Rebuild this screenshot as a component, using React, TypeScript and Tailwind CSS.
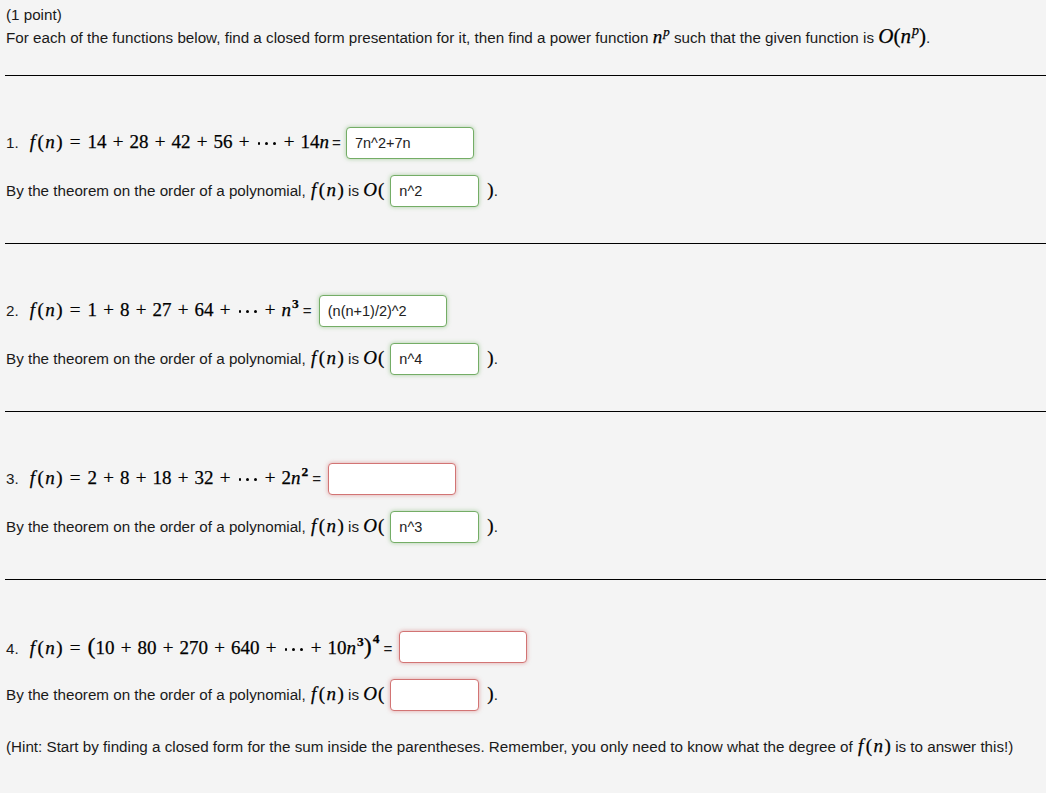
import React from "react";

const M = ({ children }: { children: React.ReactNode }) => (
  <span className="font-['Liberation_Serif','DejaVu_Serif',serif] text-[19px] leading-none whitespace-nowrap text-black [-webkit-text-stroke:0.25px_black]">
    {children}
  </span>
);
const I = ({ children }: { children: React.ReactNode }) => <span className="italic">{children}</span>;
const Plus = () => <span className="mx-[4px] inline-block w-[15px] text-center">+</span>;
const Eq = () => <span className="mx-[5px] inline-block w-[15px] text-center">=</span>;
const Dots = () => (
  <span className="inline-flex w-[22px] items-center justify-between px-[2px] align-middle">
    <span className="h-[2.5px] w-[2.5px] rounded-full bg-black" />
    <span className="h-[2.5px] w-[2.5px] rounded-full bg-black" />
    <span className="h-[2.5px] w-[2.5px] rounded-full bg-black" />
  </span>
);
const Sup = ({ children }: { children: React.ReactNode }) => (
  <span className="relative -top-[8px] ml-[1px] text-[13.5px] font-bold">{children}</span>
);

const Fn = () => (
  <>
    <span className="italic pl-[1px] pr-[2.5px]">f</span>(<span className="italic px-[1.5px]">n</span>)
  </>
);

function Box({ value, ok, wide }: { value: string; ok: boolean; wide?: boolean }) {
  const cls = ok
    ? "border-[#74ad66] shadow-[0_0_4px_rgba(110,175,95,0.55)]"
    : "border-[#d27474] shadow-[0_0_4px_rgba(210,100,100,0.55)]";
  return (
    <input
      readOnly
      value={value}
      className={`h-[32px] ${wide ? "w-[128px]" : "w-[89px]"} rounded-[4px] border bg-white px-[8px] text-[14.5px] text-[#222] outline-none ${cls}`}
    />
  );
}

function Section({
  num,
  math,
  top,
  topOk,
  bottom,
  bottomOk,
  last,
  tight,
}: {
  num: string;
  math: React.ReactNode;
  top: string;
  topOk: boolean;
  bottom: string;
  bottomOk: boolean;
  last?: boolean;
  tight?: boolean;
}) {
  return (
    <div className="border-t border-black">
      <div className={`pt-[51px] ${last ? "" : "pb-[36px]"}`}>
        <div className="flex h-[32px] items-center pl-[1px]">
          <span className="whitespace-nowrap">
            {num}
            <span className="ml-[10px]">
              <M>{math}</M>
            </span>
            <span className={tight ? "ml-[3px]" : "ml-[4px]"}>=</span>
          </span>
          <span className={tight ? "ml-[5px]" : "ml-[7px]"}>
            <Box value={top} ok={topOk} wide />
          </span>
        </div>
        <div className="mt-[16px] flex h-[32px] items-center pl-[1px]">
          <span className="whitespace-nowrap">
            By the theorem on the order of a polynomial,&nbsp;
            <M>
              <Fn />
            </M>
            &nbsp;is&nbsp;
            <M>
              <I>O</I>
              <span className="ml-[1px]">(</span>
            </M>
          </span>
          <span className="ml-[6px]">
            <Box value={bottom} ok={bottomOk} />
          </span>
          <span className="ml-[8px] whitespace-nowrap">
            <M>)</M>.
          </span>
        </div>
      </div>
    </div>
  );
}

export default function App() {
  return (
    <div className="min-h-screen overflow-hidden bg-[#f4f4f4] pl-[5px] font-['Liberation_Sans',Arial,sans-serif] text-[15.2px] leading-[22px] text-[#1a1a1a]">
      <div className="pt-[4px] pl-[1px]">
        <div>(1 point)</div>
        <div className="whitespace-nowrap">
          For each of the functions below, find a closed form presentation for it, then find a power function&nbsp;
          <M>
            <I>n</I>
            <span className="relative -top-[7px] ml-[1px] text-[13px] italic">p</span>
          </M>
          &nbsp;such that the given function is&nbsp;
          <M>
            <span className="text-[21px]">
              <I>O</I>(<I>n</I>
              <span className="relative -top-[8px] ml-[1px] text-[14px] italic">p</span>)
            </span>
          </M>
          .
        </div>
      </div>
      <div className="mt-[26px]">
        <Section
          num="1."
          tight
          math={
            <>
              <Fn />
              <Eq />
              14
              <Plus />
              28
              <Plus />
              42
              <Plus />
              56
              <Plus />
              <Dots />
              <Plus />
              14<I>n</I>
            </>
          }
          top="7n^2+7n"
          topOk
          bottom="n^2"
          bottomOk
        />
        <Section
          num="2."
          math={
            <>
              <Fn />
              <Eq />
              1
              <Plus />
              8
              <Plus />
              27
              <Plus />
              64
              <Plus />
              <Dots />
              <Plus />
              <I>n</I>
              <Sup>3</Sup>
            </>
          }
          top="(n(n+1)/2)^2"
          topOk
          bottom="n^4"
          bottomOk
        />
        <Section
          num="3."
          math={
            <>
              <Fn />
              <Eq />
              2
              <Plus />
              8
              <Plus />
              18
              <Plus />
              32
              <Plus />
              <Dots />
              <Plus />
              2<I>n</I>
              <Sup>2</Sup>
            </>
          }
          top=""
          topOk={false}
          bottom="n^3"
          bottomOk
        />
        <Section
          num="4."
          math={
            <>
              <Fn />
              <Eq />
              <span className="text-[24px]">(</span>
              10
              <Plus />
              80
              <Plus />
              270
              <Plus />
              640
              <Plus />
              <Dots />
              <Plus />
              10<I>n</I>
              <Sup>3</Sup>
              <span className="text-[24px]">)</span>
              <span className="relative -top-[11px] ml-[1px] text-[13.5px] font-bold">4</span>
            </>
          }
          top=""
          topOk={false}
          bottom=""
          bottomOk={false}
          last
        />
        <div className="mt-[25px] whitespace-nowrap pl-[1px]">
          (Hint: Start by finding a closed form for the sum inside the parentheses. Remember, you only need to know what the degree of&nbsp;
          <M>
            <Fn />
          </M>
          &nbsp;is to answer this!)
        </div>
      </div>
    </div>
  );
}
